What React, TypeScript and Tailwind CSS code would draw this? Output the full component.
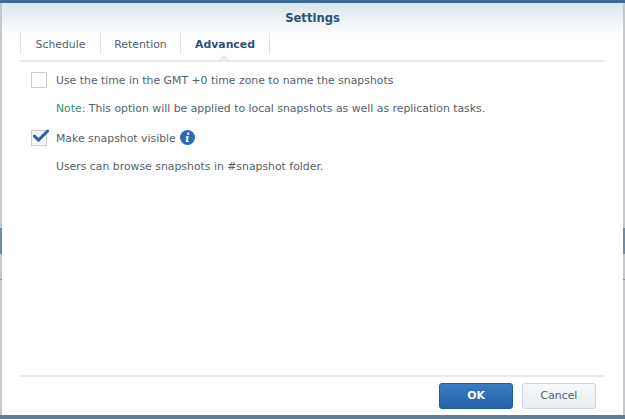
import { Check } from "lucide-react";

const Tab = ({ label, active }: { label: string; active?: boolean }) => (
    <div className={active
        ? "h-[21px] w-[89px] pt-[3px] flex items-center justify-center border-r border-[#dfe3e6] text-[10.87px] font-bold text-[#2d5076]"
        : "h-[21px] w-[80px] pt-[3px] flex items-center justify-center border-r border-[#dfe3e6] text-[10.87px] text-[#555f69]"}>
        {label}
    </div>
);

export default function App() {
    return (
        <div className="relative w-[625px] h-[419px] overflow-hidden bg-[#c4c8cc] font-['DejaVu_Sans',sans-serif]">
            {/* window behind the dialog */}
            <div className="flex flex-col h-full">
                <div className="h-[3px] bg-[#3f6a94]" />
                <div className="h-[225px]" />
                <div className="h-[26px] bg-[#6b8ba8]" />
                <div className="h-[25px]" />
                <div className="h-px bg-[#8a8d90]" />
                <div className="flex-1" />
                <div className="h-[4px] bg-[#5f7f99]" />
            </div>

            {/* dialog */}
            <div className="absolute left-[2px] top-[3px] w-[621px] h-[412px] flex flex-col bg-white">
                <div className="h-[30px] pt-[1px] shrink-0 flex items-center justify-center bg-gradient-to-b from-[#dbe6ef] to-[#fbfcfd] text-[11.6px] font-bold text-[#2d5076]">
                    Settings
                </div>

                <div className="flex-1 flex flex-col px-[18px]">
                    <div className="relative flex h-[29px] items-start border-b-2 border-[#e8eaec]">
                        <div className="h-[21px] border-l border-[#dfe3e6]" />
                        <Tab label="Schedule" />
                        <Tab label="Retention" />
                        <Tab label="Advanced" active />
                        <div className="absolute left-[198px] bottom-0 w-[12px] h-[5px] bg-[#e8eaec] [clip-path:polygon(50%_0,100%_100%,0_100%)]" />
                    </div>

                    <div className="flex-1 flex flex-col pl-[11px] text-[10.87px] text-[#555f69]">
                        <div className="flex items-center gap-[9px] mt-[9px] h-[18px]">
                            <div className="w-[16px] h-[16px] border border-[#c9cfd6] bg-white" />
                            <span className="pt-[2px]">Use the time in the GMT +0 time zone to name the snapshots</span>
                        </div>
                        <div className="mt-[11px] ml-[25px] h-[18px] flex items-center">
                            <span className="whitespace-pre"><span className="text-[#2f9468]">Note:</span> This option will be applied to local snapshots as well as replication tasks.</span>
                        </div>
                        <div className="flex items-center gap-[9px] mt-[11px] h-[18px]">
                            <div className="relative w-[16px] h-[16px] border border-[#c9cfd6] bg-[#f4f7fa]">
                                <Check className="absolute left-[-1px] top-[-5px] w-[20px] h-[20px] text-[#2c62a3]" strokeWidth={3.6} />
                            </div>
                            <span className="pt-[2px]">Make snapshot visible</span>
                            <svg viewBox="0 0 16 16" className="w-[15px] h-[15px] ml-[-5px] mt-[-2px]">
                                <circle cx="8" cy="8" r="8" fill="#2a6ab5" />
                                <circle cx="8.8" cy="3.9" r="1.3" fill="#fff" />
                                <path d="M6.3 6.6h3.1l-1 5h1v1.3H6l1-5H6.1z" fill="#fff" />
                            </svg>
                        </div>
                        <div className="mt-[11px] ml-[25px] h-[18px] flex items-center">
                            Users can browse snapshots in #snapshot folder.
                        </div>
                    </div>

                    <div className="h-[37px] shrink-0 flex justify-end gap-[9px] pt-[6px] pr-[9px] mb-[3px] border-t-2 border-[#e8eaec]">
                        <button className="w-[74px] h-[26px] pt-[1px] rounded-[3px] border border-[#1f5a9e] bg-gradient-to-b from-[#3b7cc2] to-[#2462aa] text-[10.87px] font-bold text-white">OK</button>
                        <button className="w-[74px] h-[26px] pt-[1px] rounded-[3px] border border-[#d0d6dc] bg-gradient-to-b from-[#f6f8fa] to-[#eaeef2] text-[10.87px] text-[#555f69]">Cancel</button>
                    </div>
                </div>
            </div>
        </div>
    );
}
